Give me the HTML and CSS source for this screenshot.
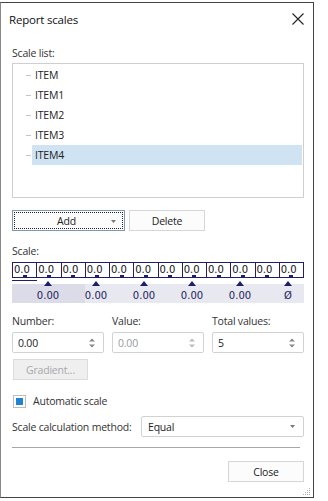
FILE: index.html
```html
<!DOCTYPE html>
<html>
<head>
<meta charset="utf-8">
<link rel="stylesheet" href="styles.css">
</head>
<body>
<div class="dialog">
  <div class="titlebar">
    <span class="title">Report scales</span>
    <svg class="close-x" width="12" height="12" viewBox="0 0 12 12"><path d="M0.5 0.5 L11.5 11.5 M11.5 0.5 L0.5 11.5" stroke="#222" stroke-width="1.1" fill="none"/></svg>
  </div>
  <div class="content">
    <div class="label lbl-list">Scale list:</div>
    <div class="listbox">
      <div class="tree-row"><span class="dash"></span><span class="item">ITEM</span></div>
      <div class="tree-row"><span class="dash"></span><span class="item">ITEM1</span></div>
      <div class="tree-row"><span class="dash"></span><span class="item">ITEM2</span></div>
      <div class="tree-row"><span class="dash"></span><span class="item">ITEM3</span></div>
      <div class="tree-row"><span class="dash"></span><span class="item selected">ITEM4</span></div>
    </div>
    <div class="btn-row">
      <div class="btn btn-add"><div class="focus"><span class="btn-text">Add</span><svg class="dd" width="5" height="3" viewBox="0 0 5 3"><path d="M0 0 H5 L2.5 3 Z" fill="#777"/></svg></div></div>
      <div class="btn btn-delete">Delete</div>
    </div>
    <div class="label lbl-scale">Scale:</div>
    <div class="scale">
      <div class="cells">
        <div class="cell">0.0<i></i></div><div class="cell">0.0<i></i></div><div class="cell">0.0<i></i></div><div class="cell">0.0<i></i></div>
        <div class="cell">0.0<i></i></div><div class="cell">0.0<i></i></div><div class="cell">0.0<i></i></div><div class="cell">0.0<i></i></div>
        <div class="cell">0.0<i></i></div><div class="cell">0.0<i></i></div><div class="cell">0.0<i></i></div><div class="cell">0.0<i></i></div>
      </div>
      <div class="band">
        <div class="seg seg-sel"><span class="underline"></span></div><div class="seg seg-a"></div><div class="seg seg-b"></div>
        <div class="marks">
          <div class="mark"><b></b><span>0.00</span></div>
          <div class="mark"><b></b><span>0.00</span></div>
          <div class="mark"><b></b><span>0.00</span></div>
          <div class="mark"><b></b><span>0.00</span></div>
          <div class="mark"><b></b><span>0.00</span></div>
          <div class="mark"><b></b><span>Ø</span></div>
        </div>
      </div>
    </div>
    <div class="fields">
      <div class="field">
        <div class="label">Number:</div>
        <div class="spin"><span>0.00</span><svg width="6" height="10" viewBox="0 0 6 10"><path d="M0 3.5 L3 0.5 L6 3.5 Z M0 6.5 L3 9.5 L6 6.5 Z" fill="#888"/></svg></div>
      </div>
      <div class="field">
        <div class="label">Value:</div>
        <div class="spin disabled"><span>0.00</span><svg width="6" height="10" viewBox="0 0 6 10"><path d="M0 3.5 L3 0.5 L6 3.5 Z M0 6.5 L3 9.5 L6 6.5 Z" fill="#bbb"/></svg></div>
      </div>
      <div class="field">
        <div class="label">Total values:</div>
        <div class="spin"><span>5</span><svg width="6" height="10" viewBox="0 0 6 10"><path d="M0 3.5 L3 0.5 L6 3.5 Z M0 6.5 L3 9.5 L6 6.5 Z" fill="#888"/></svg></div>
      </div>
    </div>
    <div class="btn btn-gradient">Gradient...</div>
    <div class="check-row"><span class="checkbox"><span class="check-fill"></span></span><span class="label">Automatic scale</span></div>
    <div class="combo-row">
      <span class="label">Scale calculation method:</span>
      <div class="combo"><span>Equal</span><svg width="5" height="3" viewBox="0 0 5 3"><path d="M0 0 H5 L2.5 3 Z" fill="#777"/></svg></div>
    </div>
    <div class="separator"></div>
    <div class="footer"><div class="btn btn-close">Close</div></div>
  </div>
  <svg class="grip" width="9" height="9" viewBox="0 0 9 9"><g fill="#b0b0b0"><rect x="7" y="1" width="1" height="1"/><rect x="5" y="3" width="1" height="1"/><rect x="7" y="3" width="1" height="1"/><rect x="3" y="5" width="1" height="1"/><rect x="5" y="5" width="1" height="1"/><rect x="7" y="5" width="1" height="1"/><rect x="1" y="7" width="1" height="1"/><rect x="3" y="7" width="1" height="1"/><rect x="5" y="7" width="1" height="1"/><rect x="7" y="7" width="1" height="1"/></g></svg>
</div>
</body>
</html>
```
FILE: styles.css
```css
* { box-sizing: border-box; }
html, body { margin: 0; padding: 0; background: #fff; }
body {
  width: 328px; height: 501px;
  font-family: "Open Sans", "Noto Sans", sans-serif;
  font-size: 10.5px;
  letter-spacing: -0.2px;
  color: #222;
  padding-top: 2px;
}
.dialog {
  position: relative;
  width: 314px;
  height: 496px;
  border: 1px solid #444;
  border-left-color: #888;
  background: #fff;
}
.titlebar {
  height: 32px;
  display: flex;
  align-items: center;
  justify-content: space-between;
  padding: 0 9px 0 8px;
}
.title { font-size: 11.5px; color: #111; }
.close-x { display: block; }
.content { padding: 0 9px 0 11px; }
.label { line-height: 16px; color: #333; white-space: nowrap; }
.lbl-list { margin-top: 10px; }
.listbox {
  margin-top: 2px;
  height: 135px;
  border: 1px solid #cfcfcf;
  padding: 1px 1px 0 0;
}
.tree-row {
  display: flex;
  align-items: center;
  height: 20px;
}
.dash { width: 5px; height: 1px; background: #c4c4c4; margin-left: 13px; margin-right: 1px; }
.item {
  flex: 1;
  height: 20px;
  line-height: 20px;
  padding-left: 3px;
  color: #222;
}
.item.selected { background: #cfe3f3; }
.btn-row { display: flex; gap: 4px; margin-top: 12px; }
.btn {
  height: 21px;
  border: 1px solid #d6d6d6;
  background: #fcfcfc;
  display: flex;
  align-items: center;
  justify-content: center;
  color: #222;
}
.btn-add {
  width: 113px;
  border-color: #7d98b3;
  padding: 1px;
}
.btn-add .focus {
  width: 100%; height: 100%;
  border: 1px dotted #222;
  display: flex; align-items: center;
  position: relative;
}
.btn-add .btn-text { flex: 1; text-align: center; padding-right: 4px; }
.btn-add .dd { position: absolute; right: 6px; top: 7px; }
.btn-delete { width: 76px; }
.lbl-scale { margin-top: 12px; }
.scale { margin-top: 3px; width: 292px; }
.cells {
  display: grid;
  grid-template-columns: repeat(12, 1fr);
  height: 16px;
  border: 1px solid #1e1e6a;
  border-left: none;
}
.cell {
  position: relative;
  border-left: 1px solid #1e1e6a;
  font-family: "DejaVu Sans", sans-serif;
  font-size: 10px;
  letter-spacing: 0;
  line-height: 13px;
  padding-left: 1px;
  color: #111;
}
.cell i {
  position: absolute;
  left: 50%; bottom: 0;
  width: 4px; height: 2px;
  margin-left: -2px;
  background: #1e1e6a;
}
.band {
  position: relative;
  height: 25px;
  display: grid;
  grid-template-columns: 73px 12px 1fr;
  grid-template-rows: 6px 1fr;
}
.seg-sel { grid-column: 1; grid-row: 2; background: #dcdce8; }
.seg-a { grid-column: 2; grid-row: 2; background: #e8e8f1; }
.seg-b { grid-column: 3; grid-row: 2; background: #e8e8f1; }
.underline {
  position: absolute;
  left: 0; top: 2px;
  width: 25px; height: 1px;
  background: #1e1e6a;
}
.marks {
  position: absolute;
  inset: 0;
  display: grid;
  grid-template-columns: repeat(6, 1fr);
  padding-left: 24px;
}
.mark {
  position: relative;
  width: 48px;
  display: flex;
  flex-direction: column;
  align-items: center;
}
.mark b {
  display: block;
  margin-top: 3px;
  margin-left: -24px;
  width: 0; height: 0;
  border-left: 4px solid transparent;
  border-right: 4px solid transparent;
  border-bottom: 5px solid #1e1e6a;
}
.mark span {
  margin-left: -24px;
  margin-top: 4px;
  font-family: "DejaVu Sans", sans-serif;
  font-size: 10px;
  letter-spacing: 0;
  line-height: 12px;
  color: #22225a;
}
.fields {
  display: grid;
  grid-template-columns: 92px 92px 92px;
  column-gap: 8px;
  margin-top: 10px;
}
.field .label { margin-bottom: 3px; }
.spin {
  height: 21px;
  border: 1px solid #d2d2d2;
  border-radius: 2px;
  display: flex;
  align-items: center;
  justify-content: space-between;
  padding: 0 8px 0 5px;
  color: #222;
}
.spin svg { display: block; }
.spin.disabled span { color: #9a9a9a; }
.btn-gradient {
  width: 75px;
  margin-left: 1px;
  margin-top: 6px;
  background: #efefef;
  border-color: #dcdcdc;
  color: #a8a8a8;
}
.check-row {
  display: flex;
  align-items: center;
  height: 16px;
  margin-top: 13px;
  margin-left: 1px;
}
.checkbox {
  width: 13px; height: 13px;
  border: 1px solid #bdbdbd;
  background: #fff;
  padding: 2px;
  margin-right: 7px;
}
.check-fill { display: block; width: 7px; height: 7px; background: #1d83d2; }
.combo-row {
  display: flex;
  align-items: center;
  justify-content: space-between;
  margin-top: 7px;
}
.combo {
  width: 163px;
  height: 21px;
  border: 1px solid #d2d2d2;
  border-radius: 2px;
  display: flex;
  align-items: center;
  justify-content: space-between;
  padding: 0 8px 0 6px;
  color: #222;
}
.separator { margin-top: 10px; margin-right: 4px; height: 1px; background: #a8a8a8; }
.footer { display: flex; justify-content: flex-end; margin-top: 13px; }
.btn-close { width: 76px; }
.grip { position: absolute; right: 2px; bottom: 1px; }
```
